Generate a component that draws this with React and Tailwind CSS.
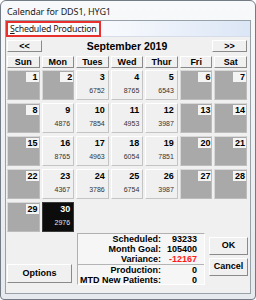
import React from "react";

const weeks = [
  [[1, null, 1], [2, null, 1], [3, 6752], [4, 8765], [5, 6543], [6, null, 1], [7, null, 1]],
  [[8, null, 1], [9, 4876], [10, 7854], [11, 4953], [12, 3987], [13, null, 1], [14, null, 1]],
  [[15, null, 1], [16, 8765], [17, 4963], [18, 6054], [19, 7851], [20, null, 1], [21, null, 1]],
  [[22, null, 1], [23, 4367], [24, 3786], [25, 6754], [26, 3987], [27, null, 1], [28, null, 1]],
  [[29, null, 1], [30, 2976, 0, 1]],
];

const raised =
  "border border-t-white border-l-white border-b-[#8a8a8a] border-r-[#8a8a8a]";

function DayCell({ day, value, off, selected }) {
  if (off) {
    return (
      <div className="h-[30px] bg-[#a9a9a9] border border-t-[#d8d8d8] border-l-[#d8d8d8] border-b-[#bcbcbc] border-r-[#bcbcbc] flex justify-end">
        <div className="w-[13px] h-[10px] mt-[0.5px] bg-[#f4f4f4] text-right pr-[1px] text-[9px] font-bold leading-[10px] text-black">
          {day}
        </div>
      </div>
    );
  }
  if (selected) {
    return (
      <div className="h-[30px] bg-[#0c0c0c] border border-[#3a3a3a] flex flex-col items-end pr-[3px]">
        <div className="mt-[1px] text-[9px] font-bold leading-[10px] text-white">{day}</div>
        <div className="mt-[5px] text-[7px] leading-[8px] text-[#e6e6e6]">{value}</div>
      </div>
    );
  }
  return (
    <div className="h-[30px] bg-[#f0f0f0] border border-t-white border-l-white border-b-[#c4c4c4] border-r-[#c4c4c4] flex flex-col items-end pr-[3px]">
      <div className="mt-[1px] text-[9px] font-bold leading-[10px] text-black">{day}</div>
      <div className="mt-[5px] text-[7px] leading-[8px] text-[#333]">{value}</div>
    </div>
  );
}

function Stat({ label, value, red }) {
  return (
    <div className="flex h-[10px] leading-[10px]">
      <div className="w-[83px] text-right">{label}</div>
      <div className={"flex-1 text-right pr-[7px] " + (red ? "text-[#ff1a1a]" : "")}>{value}</div>
    </div>
  );
}

export default function App() {
  return (
    <div className="w-[256px] h-[300px] bg-white font-['Liberation_Sans',Arial,sans-serif] text-black">
      <div className="h-[300px] flex flex-col rounded-t-[6px] rounded-b-[4px] border border-[#737b85] bg-gradient-to-b from-[#f8f9fb] via-[#eef0f3] to-[#e6e9ed] px-[4px] pb-[5px]">
        <div className="h-[19px] flex items-center pl-[2px] pt-[2px] text-[9px] tracking-[-0.1px] font-['Noto_Sans',sans-serif] text-[#1a1a1a]">
          Calendar for DDS1, HYG1
        </div>
        <div className="flex-1 flex flex-col border border-[#98a0a8] bg-[#f0f0f0]">
          <div className="h-[16px] flex bg-gradient-to-r from-white via-[#f4f7fc] to-[#dbe6f6] border-b border-[#d6dde8]">
            <div className="h-[16px] border-2 border-[#e8312e] pl-[2px] pr-[2px] text-[8.8px] leading-[12px] whitespace-nowrap tracking-[-0.2px] font-['Noto_Sans',sans-serif] text-[#1a1a1a]">
              <span className="underline">S</span>cheduled Production
            </div>
          </div>

          <div className="ml-[1px] w-[240px] mt-[3px] flex items-center justify-between">
            <div className={"w-[35px] h-[12px] bg-[#f0f0f0] flex items-center justify-center text-[9px] font-bold leading-none " + raised}>
              &lt;&lt;
            </div>
            <div className="text-[10.5px] font-bold leading-none">September 2019</div>
            <div className={"w-[35px] h-[12px] bg-[#f0f0f0] flex items-center justify-center text-[9px] font-bold leading-none " + raised}>
              &gt;&gt;
            </div>
          </div>

          <div className="ml-[1px] w-[240px] mt-[4px] grid grid-cols-7 gap-x-[2px]">
            {["Sun", "Mon", "Tues", "Wed", "Thur", "Fri", "Sat"].map((n) => (
              <div key={n} className={"h-[12px] bg-[#f0f0f0] flex items-center justify-center text-[9px] font-bold leading-none " + raised}>
                {n}
              </div>
            ))}
          </div>

          <div className="ml-[1px] w-[240px] mt-[2px] grid grid-cols-7 gap-x-[2px] gap-y-[3px]">
            {weeks.flat().map(([d, v, off, sel]) => (
              <DayCell key={d} day={d} value={v} off={off} selected={sel} />
            ))}
          </div>

          <div className="mt-[1px] ml-[1px] flex items-start">
            <div className={"mt-[31px] w-[65px] h-[19px] bg-[#f0f0f0] flex items-center justify-center text-[9px] font-bold " + raised}>
              Options
            </div>
            <div className="ml-[5px] w-[128px] h-[52px] border border-t-[#b0b0b0] border-l-[#b0b0b0] border-b-white border-r-white bg-[#f6f6f6] text-[9px] font-bold">
              <div className="h-[30px]">
                <Stat label="Scheduled:" value="93233" />
                <Stat label="Month Goal:" value="105400" />
                <Stat label="Variance:" value="-12167" red />
              </div>
              <div className="border-t border-[#b4b4b4]">
                <Stat label="Production:" value="0" />
                <Stat label="MTD New Patients:" value="0" />
              </div>
            </div>
            <div className="ml-[4px] mt-[4px] w-[39px] flex flex-col gap-[3px]">
              <div className={"h-[18px] bg-[#f0f0f0] flex items-center justify-center text-[9px] font-bold " + raised}>
                OK
              </div>
              <div className={"h-[18px] bg-[#f0f0f0] flex items-center justify-center text-[9px] font-bold " + raised}>
                Cancel
              </div>
            </div>
          </div>
        </div>
      </div>
    </div>
  );
}
